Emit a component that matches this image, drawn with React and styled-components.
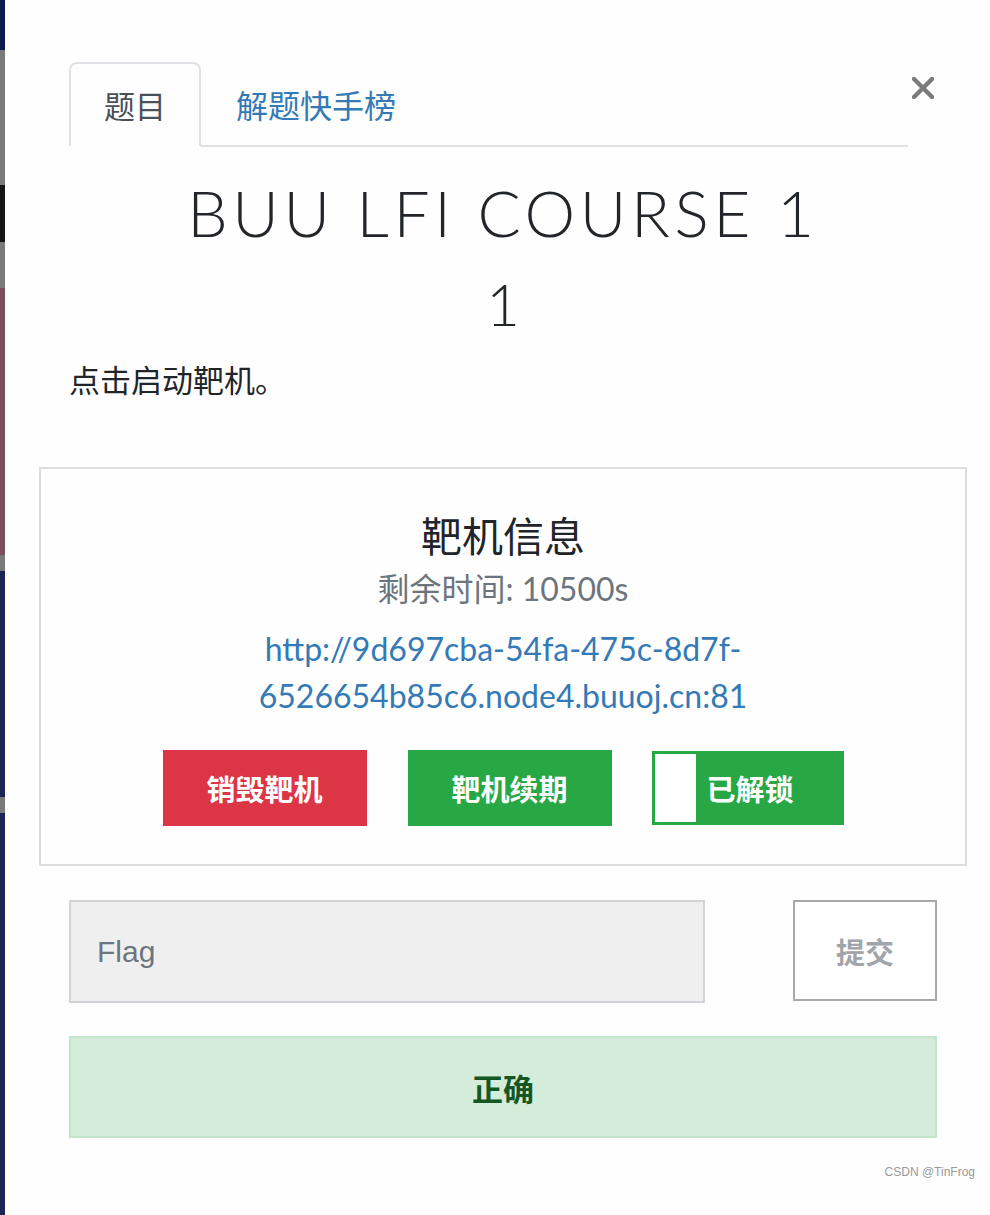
import React from "react";
import styled, { createGlobalStyle } from "styled-components";

const GlobalStyle = createGlobalStyle`
  html, body { margin: 0; padding: 0; background: #fefefe; }
  body {
    font-family: Lato, "Noto Sans CJK SC", sans-serif;
    color: #212529;
  }
  * { box-sizing: border-box; }
`;

const CJK = `"Noto Sans CJK SC", "Microsoft YaHei", sans-serif`;

const Page = styled.div`
  position: relative;
  display: flex;
  width: 990px;
  min-height: 1215px;
  background: #fefefe;
`;

/* sliver of the dimmed page showing behind the dialog */
const Backdrop = styled.div`
  width: 5px;
  flex-shrink: 0;
  display: flex;
  flex-direction: column;
`;

const Band = styled.div`
  height: ${(p) => p.$h}px;
  flex: ${(p) => (p.$grow ? 1 : "none")};
  background: ${(p) => p.$c};
`;

const Dialog = styled.div`
  flex: 1;
  display: flex;
  flex-direction: column;
  padding: 62px 53px 0 64px;
`;

const Header = styled.div`
  display: flex;
  align-items: flex-start;
`;

const Tabs = styled.nav`
  flex: 1;
  display: flex;
  border-bottom: 2px solid #dee2e6;
`;

const Tab = styled.a`
  display: block;
  font-family: ${CJK};
  font-size: ${(p) => (p.$active ? 31 : 32)}px;
  line-height: 45px;
  padding: 18px 33px 18px;
  margin-bottom: -2px;
  border: 2px solid ${(p) => (p.$active ? "#dee2e6" : "transparent")};
  border-bottom-color: ${(p) => (p.$active ? "#fefefe" : "transparent")};
  border-radius: 8px 8px 0 0;
  color: ${(p) => (p.$active ? "#495057" : "#337ab7")};
  background: ${(p) => (p.$active ? "#fefefe" : "transparent")};
  text-decoration: none;
  cursor: pointer;
`;

const CloseButton = styled.button`
  margin: 15px 3px 0 4px;
  padding: 0;
  width: 22px;
  height: 22px;
  border: none;
  background: none;
  display: flex;
  cursor: pointer;
`;

const ChallengeName = styled.h2`
  margin: 0;
  text-align: center;
  font-family: Lato, sans-serif;
  font-weight: 300;
  font-size: 64px;
  line-height: 88px;
  letter-spacing: 4.6px;
  color: #222529;
`;

const ChallengeValue = styled.h3`
  margin: 3px 0 0;
  text-align: center;
  font-family: Lato, sans-serif;
  font-weight: 300;
  font-size: 58px;
  line-height: 88px;
  color: #222529;
`;

const TitleBlock = styled.div`
  margin-top: 22px;
`;

const Description = styled.p`
  margin: 8px 0 0;
  font-family: ${CJK};
  font-size: 31px;
  line-height: 45px;
  color: #212529;
`;

const InfoCard = styled.section`
  margin: 66px -30px 0;
  border: 2px solid #dddddd;
  padding: 41px 20px 38px;
  display: flex;
  flex-direction: column;
  align-items: center;
  text-align: center;
`;

const CardTitle = styled.h4`
  margin: 0;
  font-family: ${CJK};
  font-weight: 400;
  font-size: 41px;
  line-height: 48px;
  color: #212529;
`;

const Countdown = styled.div`
  margin-top: 8px;
  font-family: Lato, ${CJK};
  font-size: 32px;
  line-height: 45px;
  color: #6c757d;
`;

const Address = styled.a`
  display: block;
  margin-top: 14px;
  max-width: 540px;
  font-family: Lato, sans-serif;
  font-size: 32px;
  line-height: 47px;
  color: #337ab7;
  text-decoration: none;
`;

const Actions = styled.div`
  margin-top: 31px;
  display: flex;
  align-items: center;
  gap: 41px;
`;

const ActionButton = styled.button`
  width: ${(p) => p.$w}px;
  height: 76px;
  border: none;
  padding: 0;
  background: ${(p) => p.$bg};
  color: #fff;
  font-family: ${CJK};
  font-weight: 700;
  font-size: 29px;
  cursor: pointer;
`;

const LockToggle = styled.div`
  width: 192px;
  height: 74px;
  margin-left: -1px;
  border: 3px solid #28a745;
  background: #28a745;
  display: flex;
  align-items: stretch;
  cursor: pointer;
`;

const ToggleKnob = styled.span`
  width: 41px;
  background: #fff;
`;

const ToggleLabel = styled.span`
  flex: 1;
  display: flex;
  align-items: center;
  padding-left: 11px;
  color: #fff;
  font-family: ${CJK};
  font-weight: 700;
  font-size: 29px;
`;

const SubmitRow = styled.form`
  margin-top: 34px;
  display: flex;
  justify-content: space-between;
  align-items: flex-start;
`;

const FlagInput = styled.input`
  width: 636px;
  height: 103px;
  border: 2px solid #d0d4d9;
  background: #efefef;
  padding: 0 26px;
  font-family: "Liberation Sans", Arial, sans-serif;
  font-size: 30px;
  color: #495057;
  outline: none;
  &::placeholder { color: #6c757d; }
`;

const SubmitButton = styled.button`
  width: 144px;
  height: 101px;
  border: 2px solid #a6a9ad;
  background: #fff;
  color: #a1a5aa;
  font-family: ${CJK};
  font-weight: 700;
  font-size: 29px;
  cursor: pointer;
`;

const Alert = styled.div`
  margin-top: 33px;
  height: 102px;
  border: 2px solid #c3e6cb;
  background: #d4edda;
  color: #155724;
  display: flex;
  align-items: center;
  justify-content: center;
  font-family: ${CJK};
  font-weight: 700;
  font-size: 31px;
`;

const Watermark = styled.span`
  position: absolute;
  right: 15px;
  bottom: 36px;
  font-family: "Liberation Sans", Arial, sans-serif;
  font-size: 12px;
  color: #999;
`;

const bands = [
  { h: 50, c: "#0d1b4b" },
  { h: 135, c: "#7a7a7a" },
  { h: 57, c: "#141414" },
  { h: 46, c: "#7a7a7a" },
  { h: 267, c: "#7a4e5e" },
  { h: 16, c: "#7a7a7a" },
  { h: 226, c: "#1c2456" },
  { h: 16, c: "#7a7a7a" },
  { h: 0, c: "#1c2456", grow: true },
];

export default function App() {
  return (
    <>
      <GlobalStyle />
      <Page>
        <Backdrop>
          {bands.map((b, i) => (
            <Band key={i} $h={b.h} $c={b.c} $grow={b.grow} />
          ))}
        </Backdrop>
        <Dialog>
          <Header>
            <Tabs>
              <Tab $active>题目</Tab>
              <Tab>解题快手榜</Tab>
            </Tabs>
            <CloseButton type="button" aria-label="Close">
              <svg width="22" height="22" viewBox="0 0 22 22">
                <path d="M2 2 L20 20 M20 2 L2 20" stroke="#7b7b7b" strokeWidth="4.4" strokeLinecap="square" />
              </svg>
            </CloseButton>
          </Header>

          <TitleBlock>
            <ChallengeName>BUU LFI COURSE 1</ChallengeName>
            <ChallengeValue>1</ChallengeValue>
          </TitleBlock>

          <Description>点击启动靶机。</Description>

          <InfoCard>
            <CardTitle>靶机信息</CardTitle>
            <Countdown>剩余时间: 10500s</Countdown>
            <Address href="#">
              http://9d697cba-54fa-475c-8d7f-6526654b85c6.node4.buuoj.cn:81
            </Address>
            <Actions>
              <ActionButton $bg="#dc3545" $w={204}>销毁靶机</ActionButton>
              <ActionButton $bg="#28a745" $w={204}>靶机续期</ActionButton>
              <LockToggle>
                <ToggleKnob />
                <ToggleLabel>已解锁</ToggleLabel>
              </LockToggle>
            </Actions>
          </InfoCard>

          <SubmitRow onSubmit={(e) => e.preventDefault()}>
            <FlagInput placeholder="Flag" />
            <SubmitButton type="submit">提交</SubmitButton>
          </SubmitRow>

          <Alert>正确</Alert>
        </Dialog>
        <Watermark>CSDN @TinFrog</Watermark>
      </Page>
    </>
  );
}
